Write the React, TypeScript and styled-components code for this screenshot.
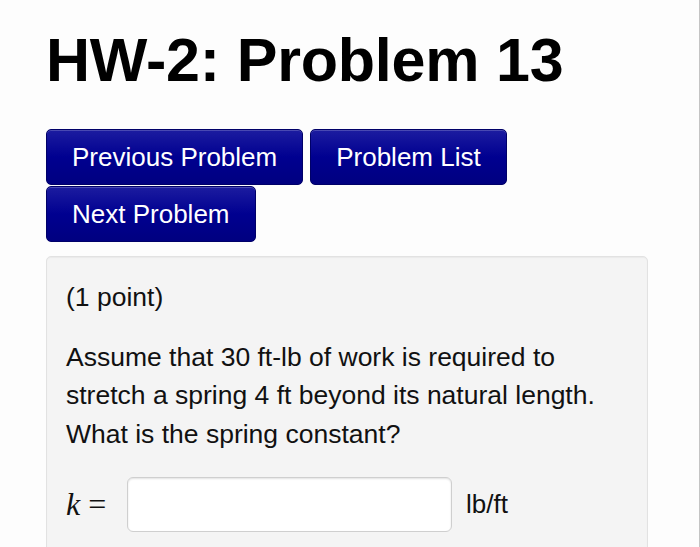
import React from "react";
import styled, { createGlobalStyle } from "styled-components";

const GlobalStyle = createGlobalStyle`
  html, body {
    margin: 0;
    padding: 0;
    background: #ffffff;
  }
  body {
    font-family: "Liberation Sans", Arial, Helvetica, sans-serif;
    color: #111;
  }
`;

const Page = styled.div`
  box-sizing: border-box;
  width: 700px;
  height: 547px;
  overflow: hidden;
  padding: 27px 0 0 46px;
  border-right: 1px solid #c4c4c4;
  background: #fdfdfd;
`;

const Title = styled.h1`
  margin: 0;
  font-size: 61px;
  line-height: 66px;
  font-weight: 700;
  color: #000;
  letter-spacing: -0.2px;
`;

const NavGroup = styled.div`
  margin-top: 36px;
  display: flex;
  flex-wrap: wrap;
  width: 470px;
  column-gap: 7px;
  row-gap: 1px;
`;

const NavButton = styled.a`
  box-sizing: border-box;
  display: inline-flex;
  align-items: center;
  height: 56px;
  padding: 0 25px;
  font-size: 26px;
  color: #fff;
  text-decoration: none;
  border-radius: 5px;
  border: 1px solid #000068;
  background: linear-gradient(#1c1ca0, #000090 50%, #000080);
  box-shadow: inset 0 1px 0 rgba(255, 255, 255, 0.2);
`;

const Well = styled.div`
  box-sizing: border-box;
  margin-top: 14px;
  width: 602px;
  height: 320px;
  padding: 21px 19px;
  background: #f4f4f4;
  border: 1px solid #e2e2e2;
  border-radius: 5px;
  box-shadow: inset 0 1px 1px rgba(0, 0, 0, 0.04);
  font-size: 26.5px;
  line-height: 38.5px;
`;

const Text = styled.p<{ $gap?: number }>`
  margin: 0 0 ${(p) => p.$gap ?? 0}px;
`;

const AnswerRow = styled.div`
  display: flex;
  align-items: center;
  gap: 14px;
  margin-top: 24px;
`;

const MathLabel = styled.span`
  font-family: "Liberation Serif", "Times New Roman", serif;
  font-size: 32px;
  width: 47px;
  white-space: nowrap;
  i {
    font-style: italic;
  }
`;

const AnswerInput = styled.input`
  box-sizing: border-box;
  width: 325px;
  height: 55px;
  border: 1px solid #cfcfcf;
  border-radius: 6px;
  background: #fff;
  box-shadow: inset 0 1px 2px rgba(0, 0, 0, 0.12);
  font-size: 24px;
  padding: 0 12px;
  outline: none;
`;

const Unit = styled.span`
  font-size: 26px;
`;

export default function App() {
  return (
    <>
      <GlobalStyle />
      <Page>
        <Title>HW-2: Problem 13</Title>
        <NavGroup>
          <NavButton href="#">Previous Problem</NavButton>
          <NavButton href="#">Problem List</NavButton>
          <NavButton href="#">Next Problem</NavButton>
        </NavGroup>
        <Well>
          <Text $gap={21}>(1 point)</Text>
          <Text>
            Assume that 30 ft-lb of work is required to
            <br />
            stretch a spring 4 ft beyond its natural length.
            <br />
            What is the spring constant?
          </Text>
          <AnswerRow>
            <MathLabel>
              <i>k</i> =
            </MathLabel>
            <AnswerInput type="text" />
            <Unit>lb/ft</Unit>
          </AnswerRow>
        </Well>
      </Page>
    </>
  );
}
